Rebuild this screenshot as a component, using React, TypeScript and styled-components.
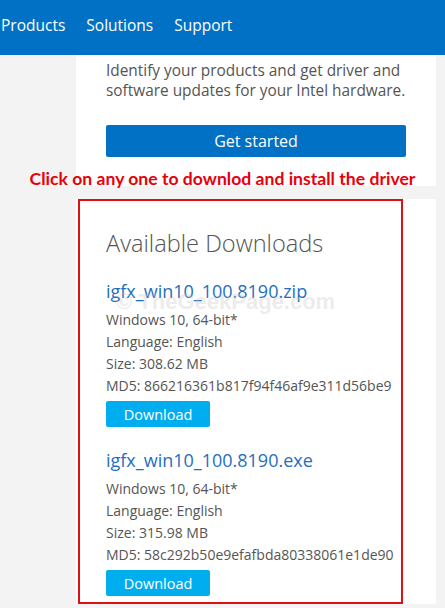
import React from 'react'
import styled, { createGlobalStyle } from 'styled-components'

const GlobalStyle = createGlobalStyle`
  html, body {
    margin: 0;
    padding: 0;
    background: #f3f3f3;
    font-family: 'Open Sans', 'Noto Sans', sans-serif;
  }
`

const Page = styled.div`
  position: relative;
  width: 445px;
  height: 608px;
  overflow: hidden;
  background: #f3f3f3;
`

const Header = styled.header`
  display: flex;
  align-items: center;
  gap: 21px;
  height: 55px;
  padding: 0 0 6px 1px;
  box-sizing: border-box;
  background: #0071c5;
`

const NavItem = styled.a`
  color: #fff;
  font-size: 15.5px;
  font-weight: 500;
  text-decoration: none;
`

const Card = styled.section<{ $top?: number }>`
  margin: ${(p) => p.$top ?? 0}px 0 0 76px;
  width: 360px;
  background: #fff;
  box-sizing: border-box;
`

const Intro = styled.div`
  padding: 6px 30px 29px 30px;
`

const Lead = styled.p`
  margin: 0 0 24px;
  font-size: 15.4px;
  line-height: 20px;
  color: #555;
`

const StartButton = styled.button`
  display: block;
  width: 300px;
  height: 32px;
  border: 0;
  border-radius: 2px;
  background: #0071c5;
  color: #fff;
  font-family: inherit;
  font-size: 16px;
`

const Caption = styled.div`
  position: absolute;
  top: 168px;
  left: 0;
  right: 0;
  text-align: center;
  color: #e8000b;
  font-family: 'Lato', 'Open Sans', sans-serif;
  font-weight: 700;
  font-size: 17.6px;
  line-height: 21px;
`

const Frame = styled.div`
  position: relative;
  margin: -3px 0 0 2px;
  width: 325px;
  height: 405px;
  box-sizing: border-box;
  border: 2px solid #dd1111;
  padding: 27px 0 0 26px;
`

const Title = styled.h2`
  margin: 0 0 21px;
  font-size: 23.6px;
  font-weight: 300;
  line-height: 30px;
  color: #555;
`

const Item = styled.div`
  margin-bottom: 21px;
`

const FileName = styled.a`
  display: block;
  font-size: 18px;
  line-height: 24px;
  color: #1f6fc0;
  text-decoration: none;
  margin-bottom: 6px;
`

const Detail = styled.div`
  font-size: 14px;
  line-height: 22px;
  color: #555;
`

const DownloadButton = styled.button`
  display: block;
  margin-top: 4px;
  width: 104px;
  height: 26px;
  border: 0;
  border-radius: 2px;
  background: #00aeef;
  color: #fff;
  font-family: inherit;
  font-size: 14.5px;
  font-weight: 500;
`

const Watermark = styled.div`
  position: absolute;
  top: 88px;
  left: 36px;
  color: rgba(200, 200, 200, 0.35);
  font-family: 'Liberation Sans', sans-serif;
  font-weight: 700;
  font-size: 22px;
  pointer-events: none;
`

const downloads = [
  {
    name: 'igfx_win10_100.8190.zip',
    size: '308.62 MB',
    md5: '866216361b817f94f46af9e311d56be9',
  },
  {
    name: 'igfx_win10_100.8190.exe',
    size: '315.98 MB',
    md5: '58c292b50e9efafbda80338061e1de90',
  },
]

export default function App() {
  return (
    <Page>
      <GlobalStyle />
      <Header>
        <NavItem>Products</NavItem>
        <NavItem>Solutions</NavItem>
        <NavItem>Support</NavItem>
      </Header>
      <Card>
        <Intro>
          <Lead>
            Identify your products and get driver and software updates for your Intel hardware.
          </Lead>
          <StartButton>Get started</StartButton>
        </Intro>
      </Card>
      <Caption>Click on any one to downlod and install the driver</Caption>
      <Card $top={16}>
        <Frame>
          <Title>Available Downloads</Title>
          {downloads.map((d) => (
            <Item key={d.name}>
              <FileName>{d.name}</FileName>
              <Detail>Windows 10, 64-bit*</Detail>
              <Detail>Language: English</Detail>
              <Detail>Size: {d.size}</Detail>
              <Detail>MD5: {d.md5}</Detail>
              <DownloadButton>Download</DownloadButton>
            </Item>
          ))}
          <Watermark>© TheGeekPage.com</Watermark>
        </Frame>
      </Card>
    </Page>
  )
}
